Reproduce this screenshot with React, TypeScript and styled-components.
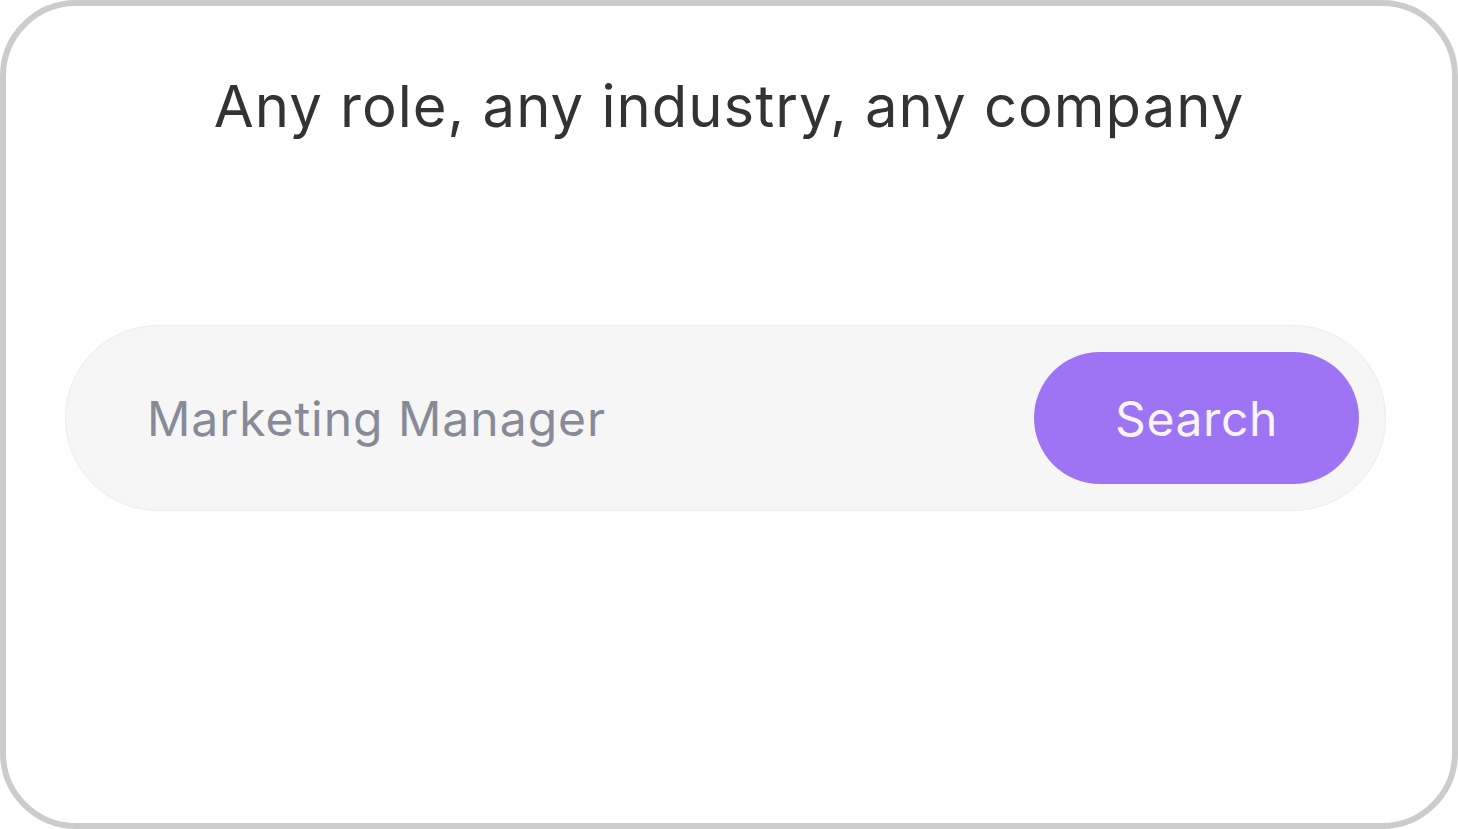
import styled, { createGlobalStyle } from "styled-components";

const GlobalStyle = createGlobalStyle`
  html, body {
    margin: 0;
    padding: 0;
    background: #ffffff;
  }
  body {
    font-family: Inter, "Noto Sans", sans-serif;
  }
`;

const App = () => {
  return (
    <>
      <GlobalStyle />
      <Card>
        <Title>Any role, any industry, any company</Title>
        <SearchBar>
          <SearchInput type="text" placeholder="Marketing Manager" />
          <SearchButton type="button">Search</SearchButton>
        </SearchBar>
      </Card>
    </>
  );
};

const Card = styled.div`
  box-sizing: border-box;
  width: 1458px;
  height: 829px;
  border: 6px solid #cccccc;
  border-radius: 76px;
  background: #ffffff;
  display: flex;
  flex-direction: column;
  padding-top: 65px;
`;

const Title = styled.h1`
  margin: 0;
  align-self: center;
  font-family: Inter, sans-serif;
  font-size: 58px;
  font-weight: 400;
  line-height: 70px;
  letter-spacing: 1px;
  color: #333333;
`;

const SearchBar = styled.div`
  box-sizing: border-box;
  margin: 184px 0 0 59px;
  width: 1321px;
  height: 186px;
  border: 1px solid #ecebf4;
  border-radius: 93px;
  background: #f6f6f6;
  display: flex;
  align-items: center;
  padding: 0 26px 0 81px;
`;

const SearchInput = styled.input`
  flex: 1;
  min-width: 0;
  border: none;
  outline: none;
  background: transparent;
  font-family: Inter, sans-serif;
  font-size: 48px;
  letter-spacing: 1px;
  color: #333333;
  padding: 0;

  &::placeholder {
    color: #878b99;
  }
`;

const SearchButton = styled.button`
  width: 325px;
  height: 132px;
  border: none;
  border-radius: 66px;
  background: #9d74f3;
  color: #f7f5fb;
  font-family: Inter, sans-serif;
  font-size: 48px;
  font-weight: 400;
  letter-spacing: 0.6px;
  cursor: pointer;
`;

export default App;
